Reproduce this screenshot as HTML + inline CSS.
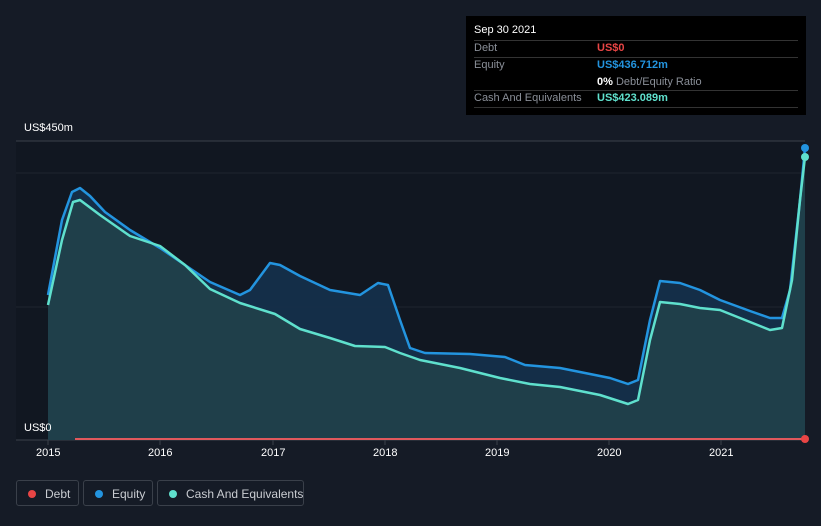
<!DOCTYPE html>
<html><head><style>
body{margin:0;width:821px;height:526px;background:#151b26;font-family:"Liberation Sans",sans-serif;overflow:hidden;position:relative}
.tt{position:absolute;left:466px;top:16px;width:340px;height:99px;background:#000;font-size:11px;color:#8a8f98}
.tt .r{position:absolute;left:8px;width:324px;border-bottom:1px solid #333}
.tt span{position:absolute;white-space:nowrap}
.leg{position:absolute;top:480px;height:26px;border:1px solid #3a404a;border-radius:3px;color:#c9ccd1;font-size:12px;line-height:26px;box-sizing:border-box;white-space:nowrap}
.leg i{position:absolute;left:11px;top:9px;width:8px;height:8px;border-radius:50%}
.ax{position:absolute;color:#fff;font-size:11px;white-space:nowrap}
</style></head><body>
<svg width="821" height="526" style="position:absolute;left:0;top:0">
<rect x="16" y="141" width="789" height="299" fill="#111721"/>
<line x1="16" y1="141" x2="805" y2="141" stroke="#3a404a"/>
<line x1="16" y1="173" x2="805" y2="173" stroke="#1e2530"/>
<line x1="16" y1="307" x2="805" y2="307" stroke="#1e2530"/>
<line x1="16" y1="440" x2="805" y2="440" stroke="#3a404a"/>
<path d="M48,295 L62,220 L72,192 L80,188 L90,196 L105,212 L130,230 L160,248 L185,265 L210,282 L240,295 L250,290 L270,263 L280,265 L300,276 L330,290 L360,295 L378,283 L388,285 L400,320 L410,348 L425,353 L470,354 L505,357 L525,365 L560,368 L590,374 L610,378 L628,384 L638,380 L650,320 L660,281 L680,283 L700,290 L720,300 L750,311 L770,318 L782,318 L790,290 L800,200 L805,148 L805,440 L48,440Z" fill="#15314c" opacity="0.9"/>
<path d="M48,305 L62,240 L73,202 L80,200 L100,215 L130,236 L160,246 L185,265 L210,289 L240,303 L275,314 L300,329 L330,338 L355,346 L385,347 L400,353 L420,360 L460,368 L500,378 L530,384 L560,387 L600,395 L628,404 L638,400 L650,340 L660,302 L680,304 L700,308 L720,310 L750,322 L770,330 L782,328 L792,280 L800,200 L805,157 L805,440 L48,440Z" fill="#1f3f4a"/>
<path d="M48,295 L62,220 L72,192 L80,188 L90,196 L105,212 L130,230 L160,248 L185,265 L210,282 L240,295 L250,290 L270,263 L280,265 L300,276 L330,290 L360,295 L378,283 L388,285 L400,320 L410,348 L425,353 L470,354 L505,357 L525,365 L560,368 L590,374 L610,378 L628,384 L638,380 L650,320 L660,281 L680,283 L700,290 L720,300 L750,311 L770,318 L782,318 L790,290 L800,200 L805,148" fill="none" stroke="#2394df" stroke-width="2.5" stroke-linejoin="round"/>
<path d="M48,305 L62,240 L73,202 L80,200 L100,215 L130,236 L160,246 L185,265 L210,289 L240,303 L275,314 L300,329 L330,338 L355,346 L385,347 L400,353 L420,360 L460,368 L500,378 L530,384 L560,387 L600,395 L628,404 L638,400 L650,340 L660,302 L680,304 L700,308 L720,310 L750,322 L770,330 L782,328 L792,280 L800,200 L805,157" fill="none" stroke="#5fe0cd" stroke-width="2.5" stroke-linejoin="round"/>
<line x1="75" y1="439" x2="805" y2="439" stroke="#e0585c" stroke-width="2"/>
<circle cx="805" cy="148" r="4" fill="#2394df"/><circle cx="805" cy="157" r="4" fill="#5fe0cd"/><circle cx="805" cy="439" r="4" fill="#e84545"/>
<g stroke="#3a404a"><line x1="48" y1="440" x2="48" y2="445"/><line x1="160" y1="440" x2="160" y2="445"/><line x1="273" y1="440" x2="273" y2="445"/><line x1="385" y1="440" x2="385" y2="445"/><line x1="497" y1="440" x2="497" y2="445"/><line x1="609" y1="440" x2="609" y2="445"/><line x1="721" y1="440" x2="721" y2="445"/></g>
</svg>
<div class="ax" style="left:24px;top:122px">US$450m</div>
<div class="ax" style="left:24px;top:422px">US$0</div>
<div class="ax" style="left:36px;top:447px">2015</div>
<div class="ax" style="left:148px;top:447px">2016</div>
<div class="ax" style="left:261px;top:447px">2017</div>
<div class="ax" style="left:373px;top:447px">2018</div>
<div class="ax" style="left:485px;top:447px">2019</div>
<div class="ax" style="left:597px;top:447px">2020</div>
<div class="ax" style="left:709px;top:447px">2021</div>
<div class="tt">
<span style="left:8px;top:8px;color:#fff">Sep 30 2021</span>
<div class="r" style="top:24px"></div>
<span style="left:8px;top:26px">Debt</span><span style="left:131px;top:26px;color:#e84545;font-weight:bold">US$0</span>
<div class="r" style="top:41px"></div>
<span style="left:8px;top:43px">Equity</span><span style="left:131px;top:43px;color:#2394df;font-weight:bold">US$436.712m</span>
<span style="left:131px;top:60px"><b style="color:#fff">0%</b> Debt/Equity Ratio</span>
<div class="r" style="top:74px"></div>
<span style="left:8px;top:76px">Cash And Equivalents</span><span style="left:131px;top:76px;color:#5fe0cd;font-weight:bold">US$423.089m</span>
<div class="r" style="top:91px"></div>
</div>
<div class="leg" style="left:16px;width:63px"><i style="background:#e84545"></i><span style="position:absolute;left:28px">Debt</span></div>
<div class="leg" style="left:83px;width:70px"><i style="background:#2394df"></i><span style="position:absolute;left:28px">Equity</span></div>
<div class="leg" style="left:157px;width:147px"><i style="background:#5fe0cd"></i><span style="position:absolute;left:28px">Cash And Equivalents</span></div>
</body></html>
